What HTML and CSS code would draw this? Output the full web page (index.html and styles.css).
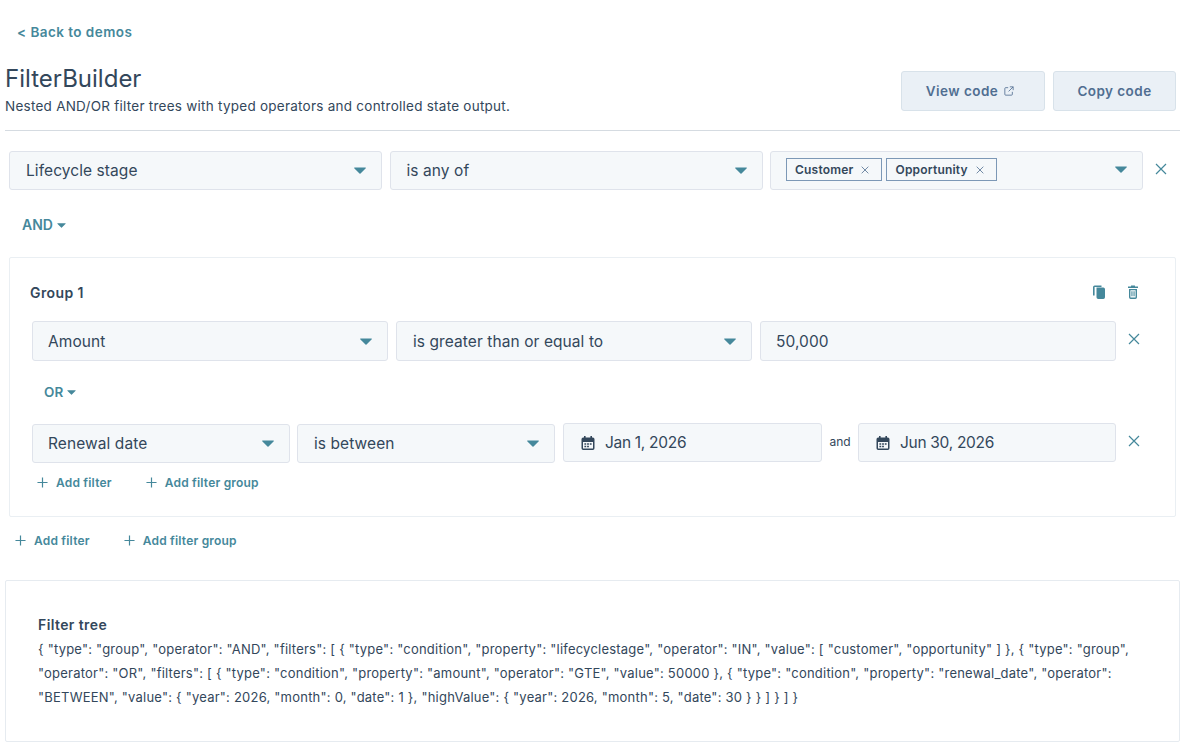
FILE: index.html
```html
<!DOCTYPE html>
<html lang="en">
<head>
<meta charset="utf-8">
<title>FilterBuilder</title>
<link rel="stylesheet" href="styles.css">
</head>
<body>
<svg class="defs" width="0" height="0" aria-hidden="true">
  <symbol id="caret" viewBox="0 0 12 7"><path d="M.6.4h10.800a.5.5 0 0 1 .4.8L6.500 6.400a.7.7 0 0 1-1 0L.2 1.200A.5.5 0 0 1 .6.4z" fill="currentColor"/></symbol>
  <symbol id="x" viewBox="0 0 12 12"><path d="M1 1l10 10M11 1L1 11" stroke="currentColor" stroke-width="1.200" fill="none"/></symbol>
  <symbol id="plus" viewBox="0 0 12 12"><path d="M6 .5v11M.5 6h11" stroke="currentColor" stroke-width="1.300" fill="none"/></symbol>
  <symbol id="cal" viewBox="0 0 14 14"><path d="M3 0h1.600v1.500h4.800V0H11v1.500h.8a1.700 1.700 0 0 1 1.700 1.700v9.100a1.700 1.700 0 0 1-1.700 1.700H2.200a1.700 1.700 0 0 1-1.700-1.700V3.200a1.700 1.700 0 0 1 1.700-1.700H3zM2 6v6.300c0 .1.100.2.200.2h9.600c.1 0 .2-.1.200-.2V6z" fill="currentColor"/><path d="M3.400 7.200h1.800v1.500H3.400zM6.100 7.200h1.800v1.500H6.100zM8.800 7.200h1.800v1.500H8.800zM3.400 9.800h1.800v1.500H3.400zM6.100 9.800h1.800v1.500H6.100z" fill="currentColor"/></symbol>
</svg>

<a class="back" href="#">&lt; Back to demos</a>

<header class="head">
  <div>
    <h1>FilterBuilder</h1>
    <p class="desc">Nested AND/OR filter trees with typed operators and controlled state output.</p>
  </div>
  <div class="actions">
    <button class="btn btn-view">View code
      <svg class="ext" viewBox="0 0 12 12"><path d="M5 2H2a1 1 0 0 0-1 1v7a1 1 0 0 0 1 1h7a1 1 0 0 0 1-1V7M7 1h4v4M11 1L5.500 6.500" stroke="currentColor" stroke-width="1" fill="none"/></svg>
    </button>
    <button class="btn btn-copy">Copy code</button>
  </div>
</header>

<section class="root">
  <div class="row row-root">
    <div class="field sel"><span>Lifecycle stage</span><svg class="caret"><use href="#caret"/></svg></div>
    <div class="field sel"><span>is any of</span><svg class="caret"><use href="#caret"/></svg></div>
    <div class="field sel multi">
      <span class="tags">
        <span class="tag">Customer<svg class="tag-x"><use href="#x"/></svg></span>
        <span class="tag">Opportunity<svg class="tag-x"><use href="#x"/></svg></span>
      </span>
      <svg class="caret"><use href="#caret"/></svg>
    </div>
    <svg class="remove"><use href="#x"/></svg>
  </div>

  <div class="logic logic-and">AND<svg class="mini"><use href="#caret"/></svg></div>

  <div class="group">
    <div class="group-head">
      <strong>Group 1</strong>
      <span class="group-tools">
        <svg class="tool" viewBox="0 0 14 14"><path d="M4.500 2.500h6.800A1.700 1.700 0 0 1 13 4.200v8.100a1.700 1.700 0 0 1-1.700 1.700H6.200a1.700 1.700 0 0 1-1.700-1.700z" fill="currentColor"/><path d="M9.500.5H2.700A1.700 1.700 0 0 0 1 2.200v8.300h1.600V2.200c0-.1 0-.1.100-.1h6.800z" fill="currentColor"/></svg>
        <svg class="tool" viewBox="0 0 14 14"><path d="M5 1.500V.8c0-.2.200-.3.400-.3h3.200c.2 0 .4.100.4.300v.7h3v1.400H2V1.500zM3 4h8v8.300A1.700 1.700 0 0 1 9.300 14H4.700A1.700 1.700 0 0 1 3 12.300zm1.400 1.300v7c0 .2.100.3.300.3h4.600c.2 0 .3-.1.300-.3v-7zm1 1h1.100v5H5.400zm2.100 0h1.100v5H7.500z" fill="currentColor"/></svg>
      </span>
    </div>
    <div class="row row-amount">
      <div class="field sel"><span>Amount</span><svg class="caret"><use href="#caret"/></svg></div>
      <div class="field sel"><span>is greater than or equal to</span><svg class="caret"><use href="#caret"/></svg></div>
      <div class="field"><span>50,000</span></div>
      <svg class="remove"><use href="#x"/></svg>
    </div>
    <div class="logic logic-or">OR<svg class="mini"><use href="#caret"/></svg></div>
    <div class="row row-date">
      <div class="field sel"><span>Renewal date</span><svg class="caret"><use href="#caret"/></svg></div>
      <div class="field sel"><span>is between</span><svg class="caret"><use href="#caret"/></svg></div>
      <div class="field date date-from"><svg class="cal"><use href="#cal"/></svg><span>Jan 1, 2026</span></div>
      <span class="and">and</span>
      <div class="field date"><svg class="cal"><use href="#cal"/></svg><span>Jun 30, 2026</span></div>
      <svg class="remove"><use href="#x"/></svg>
    </div>
    <div class="adders adders-inner">
      <a class="add" href="#"><svg class="plus"><use href="#plus"/></svg>Add filter</a>
      <a class="add" href="#"><svg class="plus"><use href="#plus"/></svg>Add filter group</a>
    </div>
  </div>

  <div class="adders adders-outer">
    <a class="add" href="#"><svg class="plus"><use href="#plus"/></svg>Add filter</a>
    <a class="add" href="#"><svg class="plus"><use href="#plus"/></svg>Add filter group</a>
  </div>
</section>

<section class="tree">
  <h2>Filter tree</h2>
  <p>{ "type": "group", "operator": "AND", "filters": [ { "type": "condition", "property": "lifecyclestage", "operator": "IN", "value": [ "customer", "opportunity" ] }, { "type": "group", "operator": "OR", "filters": [ { "type": "condition", "property": "amount", "operator": "GTE", "value": 50000 }, { "type": "condition", "property": "renewal_date", "operator": "BETWEEN", "value": { "year": 2026, "month": 0, "date": 1 }, "highValue": { "year": 2026, "month": 5, "date": 30 } } ] } ] }</p>
</section>
</body>
</html>
```

FILE: styles.css
```css
* { box-sizing: border-box; }
html, body { margin: 0; background: #fff; }
body {
  width: 1180px;
  height: 750px;
  overflow: hidden;
  padding: 0 0 0 5px;
  font-family: "Inter", "Liberation Sans", sans-serif;
  color: #33475b;
}
.defs { position: absolute; }
.back {
  display: block;
  margin: 24px 0 0 12px;
  height: 17px;
  line-height: 17px;
  font-size: 13.500px;
  font-weight: 600;
  letter-spacing: 0.45px;
  color: #45889b;
  text-decoration: none;
}
.head {
  display: flex;
  justify-content: space-between;
  align-items: flex-start;
  height: 90px;
  padding-top: 23px;
  border-bottom: 1px solid #d5dbe1;
}
h1 {
  margin: 0;
  font-size: 24px;
  line-height: 30px;
  font-weight: 400;
  color: #33475b;
}
.desc {
  margin: 2px 0 0;
  font-size: 13.500px;
  line-height: 20px;
  letter-spacing: 0.25px;
  color: #33475b;
}
.actions { display: flex; gap: 8px; margin: 7px 4px 0 0; }
.btn {
  height: 40px;
  border: 1px solid #d8e2ea;
  border-radius: 3px;
  background: #eaf0f6;
  font: 600 13.500px "Inter", sans-serif;
  letter-spacing: 0.45px;
  color: #506e91;
  display: flex;
  align-items: center;
  justify-content: center;
  gap: 6px;
  padding: 0;
}
.btn-view { width: 144px; padding-right: 6px; }
.btn-copy { width: 123px; }
.ext { width: 10px; height: 10px; }
.root { padding: 20px 0 0 4px; }
.row { display: flex; align-items: flex-start; }
.row-root { gap: 7.500px; width: 1171px; }
.row-root .field { width: 373px; height: 39px; padding-left: 16px; padding-bottom: 1px; }
.field {
  display: flex;
  align-items: center;
  height: 40px;
  padding: 0 15px;
  background: #f5f8fa;
  border: 1px solid #dfe3eb;
  border-radius: 3px;
  font-size: 15.500px;
  letter-spacing: 0.08px;
  color: #33475b;
  white-space: nowrap;
}
.sel { justify-content: space-between; }
.sel + .sel { padding-left: 16px; }
.row-root .multi { padding-left: 15px; padding-bottom: 2px; }
.tags { display: flex; gap: 4px; }
.tag {
  display: flex;
  align-items: center;
  gap: 8px;
  height: 23px;
  padding: 0 12px 0 8px;
  background: #f5f8fa;
  border: 1px solid #7c98b6;
  font-size: 12px;
  font-weight: 600;
  letter-spacing: 0.2px;
}
.tag-x { width: 8px; height: 8px; color: #506e91; }
.caret { width: 12px; height: 7px; color: #45889b; }
.remove { width: 12px; height: 12px; color: #45889b; margin: 12px 0 0 4.500px; flex: none; }
.logic {
  display: flex;
  align-items: center;
  gap: 4px;
  font-size: 14px;
  font-weight: 600;
  color: #45889b;
  line-height: 18px;
}
.logic-and { margin: 26px 0 0 13px; }
.mini { width: 9px; height: 5px; color: #45889b; }
.group {
  width: 1167px;
  height: 260px;
  margin-top: 23px;
  padding: 0 22px;
  border: 1px solid #eaeff3;
  border-radius: 2px;
}
.group-head {
  display: flex;
  justify-content: space-between;
  align-items: center;
  height: 63px;
  padding: 5px 13px 0 0;
  font-size: 14px;
  letter-spacing: 0.4px;
}
.group-head strong { font-weight: 600; margin-left: -2px; }
.group-tools { display: flex; gap: 20px; }
.tool { width: 14px; height: 14px; color: #45889b; }
.row-amount { gap: 8px; }
.row-amount .field { width: 356px; }
.row-amount .remove { margin-left: 4px; }
.logic-or { margin: 22px 0 0 12px; font-size: 13.500px; }
.row-date { margin-top: 23px; gap: 7px; }
.row-date .field { width: 258px; height: 39px; }
.row-date .date { gap: 10px; padding-left: 17px; margin-top: -1px; letter-spacing: -0.3px; }
.row-date .date-from { width: 259px; margin-left: 1px; }
.row-date .remove { margin: 11px 0 0 5px; }
.cal { width: 14px; height: 14px; color: #33475b; flex: none; }
.and { width: 22px; text-align: center; font-size: 12px; line-height: 36px; }
.adders { display: flex; gap: 34px; }
.add {
  display: flex;
  align-items: center;
  gap: 8px;
  height: 18px;
  font-size: 12px;
  font-weight: 600;
  letter-spacing: 0.2px;
  color: #45889b;
  text-decoration: none;
  white-space: nowrap;
}
.plus { width: 11px; height: 11px; color: #45889b; }
.adders-inner { margin: 10px 0 0 5px; }
.adders-outer { margin: 14px 0 0 6px; }
.tree {
  width: 1175px;
  height: 162px;
  margin-top: 31px;
  padding: 34px 32px 0;
  border: 1px solid #e6ebf0;
  border-radius: 2px;
}
.tree h2 { margin: 0; font-size: 14px; font-weight: 600; letter-spacing: 0.4px; line-height: 20px; }
.tree p { margin: 2px 0 0; font-size: 13px; letter-spacing: 0.22px; line-height: 24px; }
```
